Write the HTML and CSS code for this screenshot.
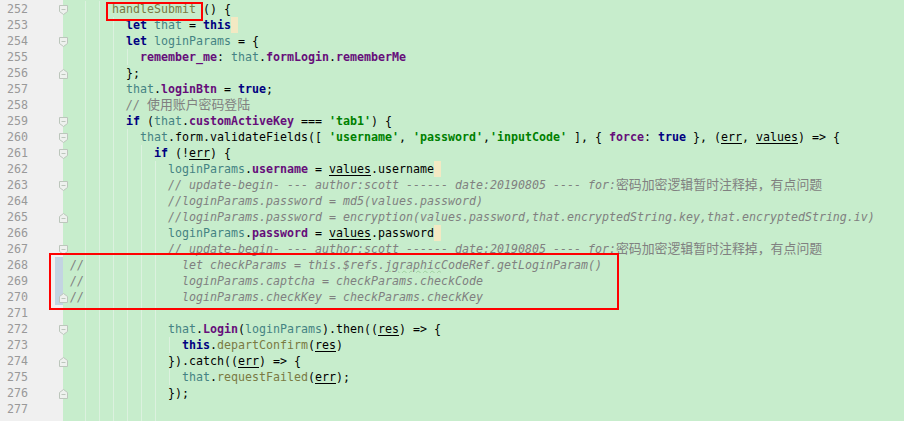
FILE: index.html
```html
<!DOCTYPE html>
<html lang="zh">
<head>
<meta charset="utf-8">
<title>handleSubmit</title>
<link rel="stylesheet" href="styles.css">
</head>
<body>
<svg class="defs" aria-hidden="true">
  <symbol id="fold-open" viewBox="0 0 9 10"><path d="M0.5 0.5H8.5V6.5L4.5 9.5L0.5 6.5Z"/><path d="M2.5 4.5H6.5"/></symbol>
  <symbol id="fold-close" viewBox="0 0 9 10"><path d="M0.5 9.5H8.5V3.5L4.5 0.5L0.5 3.5Z"/><path d="M2.5 5.5H6.5"/></symbol>
</svg>
<div class="editor">
<div class="line g2"><div class="gutter"><span class="num">252</span><span class="chg"></span></div><div class="code">      <span class="fn">handleSubmit</span> () {</div><svg class="fold"><use href="#fold-open"/></svg></div>
<div class="line g3"><div class="gutter"><span class="num">253</span><span class="chg"></span></div><div class="code">        <span class="k">let</span> <span class="v">that</span> = <span class="k">this</span><span class="hl"></span></div></div>
<div class="line g3"><div class="gutter"><span class="num">254</span><span class="chg"></span></div><div class="code">        <span class="k">let</span> <span class="v">loginParams</span> = {</div><svg class="fold"><use href="#fold-open"/></svg></div>
<div class="line g4"><div class="gutter"><span class="num">255</span><span class="chg"></span></div><div class="code">          <span class="f">remember_me</span>: <span class="v">that</span>.<span class="f">formLogin</span>.<span class="f">rememberMe</span></div></div>
<div class="line g3"><div class="gutter"><span class="num">256</span><span class="chg"></span></div><div class="code">        };</div><svg class="fold"><use href="#fold-close"/></svg></div>
<div class="line g3"><div class="gutter"><span class="num">257</span><span class="chg"></span></div><div class="code">        <span class="v">that</span>.<span class="f">loginBtn</span> = <span class="k">true</span>;</div></div>
<div class="line g3"><div class="gutter"><span class="num">258</span><span class="chg"></span></div><div class="code">        <span class="c">// <span class="cjk">使用账户密码登陆</span></span></div></div>
<div class="line g3"><div class="gutter"><span class="num">259</span><span class="chg"></span></div><div class="code">        <span class="k">if</span> (<span class="v">that</span>.<span class="f">customActiveKey</span> === <span class="s">'tab1'</span>) {</div><svg class="fold"><use href="#fold-open"/></svg></div>
<div class="line g4"><div class="gutter"><span class="num">260</span><span class="chg"></span></div><div class="code">          <span class="v">that</span>.form.validateFields([ <span class="s">'username'</span>, <span class="s">'password'</span>,<span class="s">'inputCode'</span> ], { <span class="f">force</span>: <span class="k">true</span> }, (<span class="p">err</span>, <span class="p">values</span>) =&gt; {</div><svg class="fold"><use href="#fold-open"/></svg></div>
<div class="line g5"><div class="gutter"><span class="num">261</span><span class="chg"></span></div><div class="code">            <span class="k">if</span> (!<span class="p">err</span>) {</div><svg class="fold"><use href="#fold-open"/></svg></div>
<div class="line g6"><div class="gutter"><span class="num">262</span><span class="chg"></span></div><div class="code">              <span class="v">loginParams</span>.<span class="f">username</span> = <span class="p">values</span>.username<span class="hl"></span></div></div>
<div class="line g6"><div class="gutter"><span class="num">263</span><span class="chg"></span></div><div class="code">              <span class="c">// update-begin- --- author:scott ------ date:20190805 ---- for:<span class="cjk">密码加密逻辑暂时注释掉，有点问题</span></span></div><svg class="fold"><use href="#fold-open"/></svg></div>
<div class="line g6"><div class="gutter"><span class="num">264</span><span class="chg"></span></div><div class="code">              <span class="c">//loginParams.password = md5(values.password)</span></div></div>
<div class="line g6"><div class="gutter"><span class="num">265</span><span class="chg"></span></div><div class="code">              <span class="c">//loginParams.password = encryption(values.password,that.encryptedString.key,that.encryptedString.iv)</span></div><svg class="fold"><use href="#fold-close"/></svg></div>
<div class="line g6"><div class="gutter"><span class="num">266</span><span class="chg"></span></div><div class="code">              <span class="v">loginParams</span>.<span class="f">password</span> = <span class="p">values</span>.password<span class="hl"></span></div></div>
<div class="line g6"><div class="gutter"><span class="num">267</span><span class="chg"></span></div><div class="code">              <span class="c">// update-begin- --- author:scott ------ date:20190805 ---- for:<span class="cjk">密码加密逻辑暂时注释掉，有点问题</span></span></div><svg class="fold"><use href="#fold-open"/></svg></div>
<div class="line g6 changed"><div class="gutter"><span class="num">268</span><span class="chg"></span></div><div class="code"><span class="c">//              let checkParams = this.$refs.<span class="typo">jgraphic</span>CodeRef.getLoginParam()</span></div></div>
<div class="line g6 changed"><div class="gutter"><span class="num">269</span><span class="chg"></span></div><div class="code"><span class="c">//              loginParams.captcha = checkParams.checkCode</span></div></div>
<div class="line g6 changed"><div class="gutter"><span class="num">270</span><span class="chg"></span></div><div class="code"><span class="c">//              loginParams.checkKey = checkParams.checkKey</span></div><svg class="fold"><use href="#fold-close"/></svg></div>
<div class="line g6"><div class="gutter"><span class="num">271</span><span class="chg"></span></div><div class="code"></div></div>
<div class="line g6"><div class="gutter"><span class="num">272</span><span class="chg"></span></div><div class="code">              <span class="v">that</span>.<span class="f">Login</span>(<span class="v">loginParams</span>).then((<span class="p">res</span>) =&gt; {</div><svg class="fold"><use href="#fold-open"/></svg></div>
<div class="line g7"><div class="gutter"><span class="num">273</span><span class="chg"></span></div><div class="code">                <span class="k">this</span>.<span class="fn">departConfirm</span>(<span class="p">res</span>)</div></div>
<div class="line g6"><div class="gutter"><span class="num">274</span><span class="chg"></span></div><div class="code">              }).catch((<span class="p">err</span>) =&gt; {</div><svg class="fold"><use href="#fold-close"/></svg></div>
<div class="line g7"><div class="gutter"><span class="num">275</span><span class="chg"></span></div><div class="code">                <span class="v">that</span>.<span class="fn">requestFailed</span>(<span class="p">err</span>);</div></div>
<div class="line g6"><div class="gutter"><span class="num">276</span><span class="chg"></span></div><div class="code">              });</div><svg class="fold"><use href="#fold-close"/></svg></div>
<div class="line g6"><div class="gutter"><span class="num">277</span><span class="chg"></span></div><div class="code"></div></div>
<div class="line g6"><div class="gutter"></div><div class="code"></div></div>
<div class="mark mark-1"></div>
<div class="mark mark-2"></div>
</div>
</body>
</html>
```

FILE: styles.css
```css
html, body {
  margin: 0;
  height: 100%;
  overflow: hidden;
}
body {
  background: linear-gradient(90deg, #f0f0f0 0, #f0f0f0 63px, #c7edcc 63px);
}
.defs {
  position: absolute;
  width: 0;
  height: 0;
}
.editor {
  position: relative;
  padding-top: 1px;
  font-family: "DejaVu Sans Mono", monospace;
  font-size: 11.63px;
}
.line {
  position: relative;
  display: flex;
  height: 16px;
  line-height: 16px;
}
.gutter {
  flex: none;
  width: 63px;
  display: flex;
  justify-content: space-between;
  background: #f0f0f0;
  color: #999999;
}
.num {
  width: 28px;
  text-align: right;
}
.chg {
  width: 8px;
}
.changed .chg {
  background: #c3d4e2;
}
.code {
  flex: 1;
  position: relative;
  padding-left: 7px;
  white-space: pre;
  color: #000000;
  background: #c7edcc;
}
.code::before {
  content: "";
  position: absolute;
  top: 0;
  bottom: 0;
  left: 21px;
  width: calc(var(--g, 0) * 14px);
  background: linear-gradient(90deg, transparent 1px, #dcf1df 1px, #dcf1df 2px, transparent 2px) 0 0 / 14px 100% repeat-x;
}
.g2 { --g: 2; }
.g3 { --g: 3; }
.g4 { --g: 4; }
.g5 { --g: 5; }
.g6 { --g: 6; }
.g7 { --g: 7; }

.code span { position: relative; }
.k { color: #000080; font-weight: bold; }
.v { color: #458383; }
.f { color: #660e7a; font-weight: bold; }
.fn { color: #7a7a43; }
.s { color: #008000; font-weight: bold; }
.c { color: #808080; font-style: italic; }
.p { text-decoration: underline; text-underline-offset: 2px; }
.cjk {
  font-family: "Noto Sans CJK SC", sans-serif;
  font-style: normal;
  font-size: 12.9px;
  line-height: 13px;
}
.typo {
  text-decoration: underline wavy #9fcf9f;
  text-decoration-thickness: 1px;
}
.hl {
  display: inline-block;
  width: 7px;
  height: 16px;
  vertical-align: top;
  background: #f3e9c3;
}
.fold {
  position: absolute;
  left: 59px;
  top: 4px;
  width: 9px;
  height: 10px;
  fill: #eef1ee;
  stroke: #bcc6bc;
  stroke-width: 1;
}
.mark {
  position: absolute;
  border: 2px solid #ff0000;
  box-sizing: border-box;
}
.mark-1 {
  left: 106px;
  top: 2px;
  width: 97px;
  height: 19px;
}
.mark-2 {
  left: 49px;
  top: 253px;
  width: 570px;
  height: 57px;
}
```
